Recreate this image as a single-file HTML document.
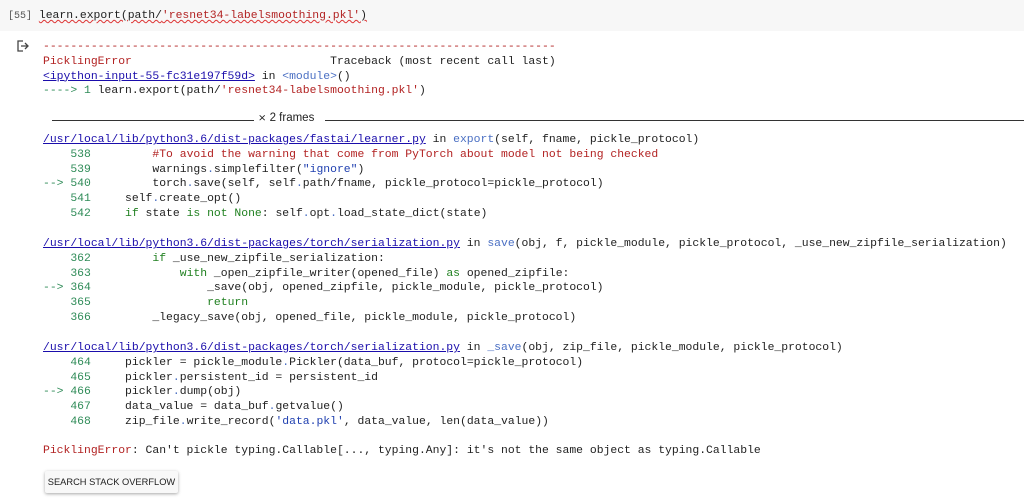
<!DOCTYPE html>
<html><head><meta charset="utf-8"><style>
body{margin:0;width:1024px;height:499px;background:#fff;overflow:hidden;position:relative;font-family:"Liberation Mono",monospace;font-size:11.4px;color:#212121}
.in{position:absolute;left:0;top:0;width:1024px;height:31px;background:#f7f7f7}
.l{position:absolute;left:43px;white-space:pre;line-height:14.8px}
.r{color:#b22222}.a{color:#1a0dab;text-decoration:underline}.f{color:#4a6fc3}.g{color:#2e8b57}.k{color:#208020}.s{color:#2040b0}
.btn{position:absolute;left:45px;top:471px;width:133px;height:22px;background:#f8f8f8;box-shadow:0 1px 3px rgba(0,0,0,.35);font-family:"Liberation Sans",sans-serif;font-size:9.3px;line-height:22px;text-align:center;color:#222;border-radius:2px}
.hr{position:absolute;top:120px;height:1px;background:#333}
</style></head><body>
<div class="in"></div>
<div class="l" style="left:8px;top:9px;color:#555"><span style="font-size:10px">[55]</span> <span style="color:#212121;text-decoration:underline wavy #d33;text-decoration-thickness:1px">learn.export(path/<span class="r">'resnet34-labelsmoothing.pkl'</span>)</span></div>
<svg style="position:absolute;left:16px;top:40px" width="13" height="12" viewBox="0 0 13 12"><path d="M7 1H2v10h5M5 6h7M9 3l3 3-3 3" fill="none" stroke="#444" stroke-width="1.3"/></svg>
<div class="l" style="top:40px"><span class="r">---------------------------------------------------------------------------</span>
<span class="r">PicklingError</span>                             Traceback (most recent call last)
<span class="a">&lt;ipython-input-55-fc31e197f59d&gt;</span> in <span class="f">&lt;module&gt;</span>()
<span class="g">----&gt; 1</span> learn.export(path/<span class="r">'resnet34-labelsmoothing.pkl'</span>)</div>
<div class="hr" style="left:52px;width:202px"></div>
<div class="hr" style="left:325px;width:699px"></div>
<div style="position:absolute;left:258px;top:112px;font-family:'Liberation Sans',sans-serif;font-size:11.5px;color:#222"><span style="font-size:10px">⨯</span> 2 frames</div>
<div class="l" style="top:133px"><span class="a">/usr/local/lib/python3.6/dist-packages/fastai/learner.py</span> in <span class="f">export</span>(self, fname, pickle_protocol)
<span class="g">    538</span>         <span class="r">#To avoid the warning that come from PyTorch about model not being checked</span>
<span class="g">    539</span>         warnings<span class="f">.</span>simplefilter(<span class="s">"ignore"</span>)
<span class="g">--&gt; 540</span>         torch<span class="f">.</span>save(self, self<span class="f">.</span>path/fname, pickle_protocol=pickle_protocol)
<span class="g">    541</span>     self<span class="f">.</span>create_opt()
<span class="g">    542</span>     <span class="k">if</span> state <span class="k">is not None</span>: self<span class="f">.</span>opt<span class="f">.</span>load_state_dict(state)</div>
<div class="l" style="top:237px"><span class="a">/usr/local/lib/python3.6/dist-packages/torch/serialization.py</span> in <span class="f">save</span>(obj, f, pickle_module, pickle_protocol, _use_new_zipfile_serialization)
<span class="g">    362</span>         <span class="k">if</span> _use_new_zipfile_serialization:
<span class="g">    363</span>             <span class="k">with</span> _open_zipfile_writer(opened_file) <span class="k">as</span> opened_zipfile:
<span class="g">--&gt; 364</span>                 _save(obj, opened_zipfile, pickle_module, pickle_protocol)
<span class="g">    365</span>                 <span class="k">return</span>
<span class="g">    366</span>         _legacy_save(obj, opened_file, pickle_module, pickle_protocol)</div>
<div class="l" style="top:341px"><span class="a">/usr/local/lib/python3.6/dist-packages/torch/serialization.py</span> in <span class="f">_save</span>(obj, zip_file, pickle_module, pickle_protocol)
<span class="g">    464</span>     pickler = pickle_module<span class="f">.</span>Pickler(data_buf, protocol=pickle_protocol)
<span class="g">    465</span>     pickler<span class="f">.</span>persistent_id = persistent_id
<span class="g">--&gt; 466</span>     pickler<span class="f">.</span>dump(obj)
<span class="g">    467</span>     data_value = data_buf<span class="f">.</span>getvalue()
<span class="g">    468</span>     zip_file<span class="f">.</span>write_record(<span class="s">'data.pkl'</span>, data_value, len(data_value))</div>
<div class="l" style="top:444px"><span class="r">PicklingError</span>: Can't pickle typing.Callable[..., typing.Any]: it's not the same object as typing.Callable</div>
<div class="btn">SEARCH STACK OVERFLOW</div>
</body></html>
